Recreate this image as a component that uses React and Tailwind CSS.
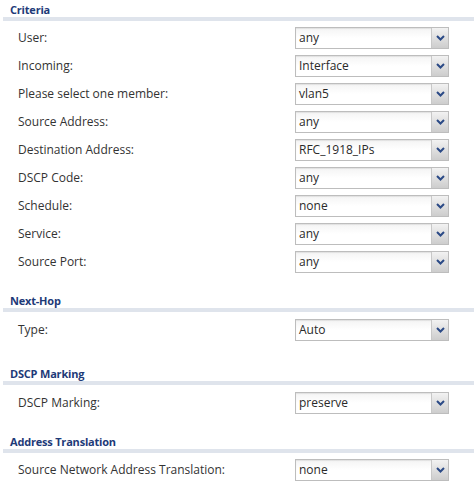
const criteria = [
  ["User:", "any"],
  ["Incoming:", "Interface"],
  ["Please select one member:", "vlan5"],
  ["Source Address:", "any"],
  ["Destination Address:", "RFC_1918_IPs"],
  ["DSCP Code:", "any"],
  ["Schedule:", "none"],
  ["Service:", "any"],
  ["Source Port:", "any"],
];

const Chevron = () => (
  <svg width="9" height="6" viewBox="0 0 9 6">
    <path d="M1 1 L4.5 4.5 L8 1" fill="none" stroke="#2b4a86" strokeWidth="2" />
  </svg>
);

const Select = ({ value }) => (
  <div className="flex w-[154px] h-[22px] mr-[25px] border border-[#bdbdbd] bg-gradient-to-b from-[#f4f4f4] via-white to-white shadow-[inset_0_1px_1px_rgba(0,0,0,0.08)]">
    <div className="flex-1 pl-[3px] text-[12px] leading-[20px] text-[#2a2a2a] truncate">{value}</div>
    <div className="w-[17px] flex items-center justify-center border-l border-[#c8c8c8] bg-gradient-to-b from-[#f2f2f2] to-[#cdcdcd]">
      <Chevron />
    </div>
  </div>
);

const Row = ({ label, value }) => (
  <div className="flex items-center">
    <div className="flex-1 pl-[15px] text-[12px] text-[#333]">{label}</div>
    <Select value={value} />
  </div>
);

const Header = ({ title, className }) => (
  <div className={className}>
    <div className="pl-[7px] h-[14px] text-[11px] leading-[14px] font-bold tracking-[-0.2px] text-[#1e3a78]">{title}</div>
    <div className="h-[4px] bg-[#dfe4ec]" />
  </div>
);

export default function App() {
  return (
    <div className="w-[474px] h-[484px] bg-white pl-[3px] overflow-hidden" style={{ fontFamily: '"Open Sans", "Liberation Sans", sans-serif' }}>
      <Header title="Criteria" className="pt-[3px]" />
      <div className="mt-[6px] flex flex-col gap-[6px]">
        {criteria.map(([l, v]) => (
          <Row key={l} label={l} value={v} />
        ))}
      </div>

      <Header title="Next-Hop" className="mt-[21px]" />
      <div className="mt-[7px]">
        <Row label="Type:" value="Auto" />
      </div>

      <Header title="DSCP Marking" className="mt-[26px]" />
      <div className="mt-[7px]">
        <Row label="DSCP Marking:" value="preserve" />
      </div>

      <Header title="Address Translation" className="mt-[21px]" />
      <div className="mt-[6px]">
        <Row label="Source Network Address Translation:" value="none" />
      </div>
    </div>
  );
}
